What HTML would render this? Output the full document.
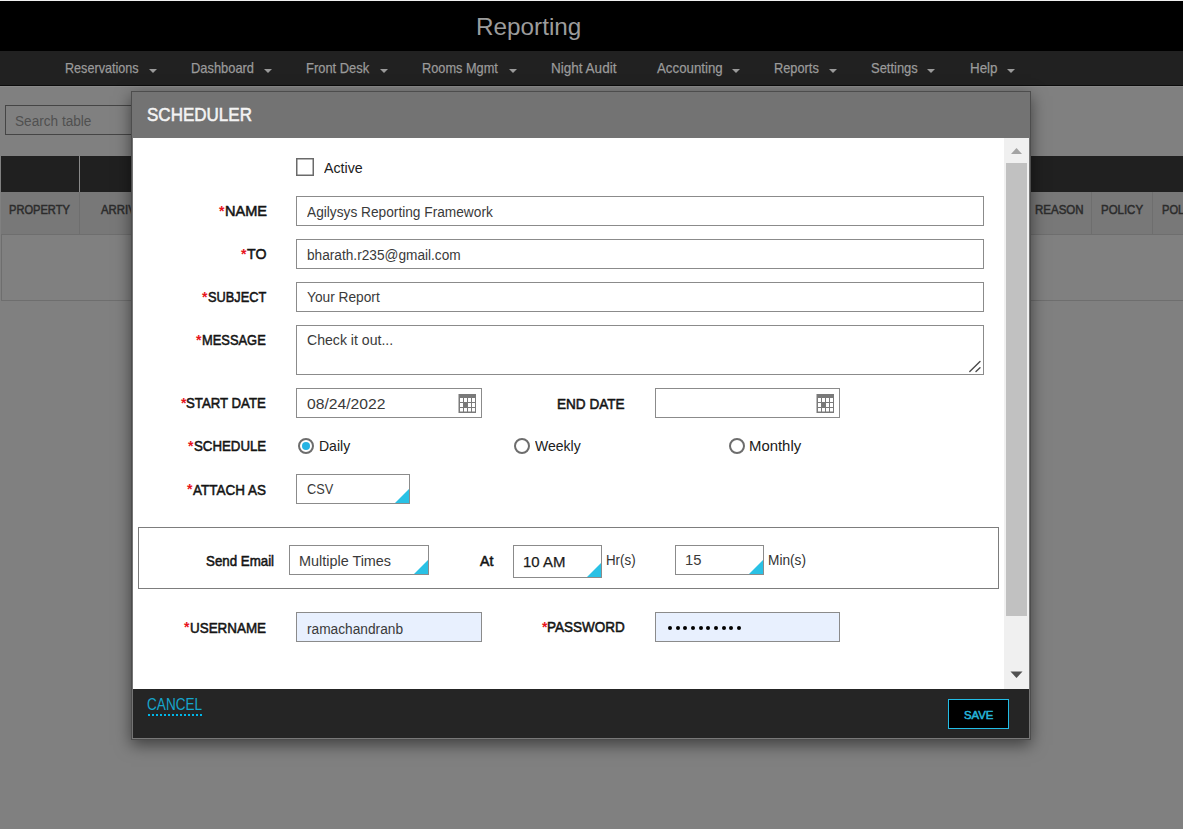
<!DOCTYPE html>
<html><head><meta charset="utf-8"><title>Reporting - Scheduler</title>
<style>
*{margin:0;padding:0;box-sizing:border-box}
html,body{width:1183px;height:829px;overflow:hidden;background:#808080;font-family:"Liberation Sans",sans-serif;position:relative}
.abs{position:absolute}
.tx{position:absolute;white-space:nowrap;line-height:1;transform-origin:0 0}
.topline{left:0;top:0;width:1183px;height:1px;background:#f0f0f0}
.hdr{left:0;top:1px;width:1183px;height:50px;background:#000}
.nav{left:0;top:51px;width:1183px;height:34px;background:#212121}
.navline{left:0;top:85px;width:1183px;height:1px;background:#0c0c0c}
.navline2{left:0;top:86px;width:1183px;height:1px;background:#8a8a8a}
.caret{position:absolute;width:0;height:0;border-left:4px solid transparent;border-right:4px solid transparent;border-top:4px solid #9a9a9a}
.search{left:5px;top:105px;width:260px;height:30px;border:1px solid #454545}
.thd{left:1px;top:156px;width:1182px;height:36px;background:#202020}
.thdsep{left:79px;top:156px;width:1px;height:36px;background:#8a8a8a}
.tlab{left:1px;top:192px;width:1182px;height:43px;background:#787878;border-bottom:1px solid #6e6e6e}
.tsep{top:192px;width:1px;height:42px;background:#6e6e6e}
.tbody{left:1px;top:235px;width:1182px;height:66px;background:#808080;border-left:1px solid #6e6e6e;border-bottom:1px solid #6e6e6e}
.modal{left:131px;top:91px;width:900px;height:649px;border:1px solid #4d4d4d;background:#747474;box-shadow:0 5px 15px rgba(0,0,0,.5)}
.mbody{left:133px;top:138px;width:896px;height:551px;background:#fff}
.mhead{left:132px;top:92px;width:898px;height:46px;background:#737373}
.mfoot{left:133px;top:689px;width:896px;height:49px;background:#252525}
.mfootline{left:132px;top:738px;width:898px;height:1px;background:#787878}
.sbtrack{left:1004px;top:138px;width:25px;height:551px;background:#f0f0f0}
.sbthumb{left:1006px;top:163px;width:21px;height:453px;background:#c1c1c1}
.inp{position:absolute;border:1px solid #8b8b8b;background:#fff}
.inp.af{background:#e8f0fe}
.tri{position:absolute;width:0;height:0;border-left:14px solid transparent;border-bottom:14px solid #29c1e5}
.chk{left:296px;top:158px;width:18px;height:18px;border:2px solid #6a6a6a;border-radius:1px}
.radio{position:absolute;width:16px;height:16px;border:2px solid #6d6d6d;border-radius:50%;background:#fff}
.radio.on::after{content:"";position:absolute;left:2px;top:2px;width:8px;height:8px;border-radius:50%;background:#25b3e3}
.sendbox{left:138px;top:527px;width:861px;height:62px;border:1px solid #7d7d7d}
.save{left:948px;top:699px;width:61px;height:30px;border:1px solid #23bde6;background:#000}
.dots{left:148px;top:714px;width:55px;height:2px;background:repeating-linear-gradient(90deg,#00b6e8 0 2px,transparent 2px 4px)}
.pw{position:absolute;width:4.2px;height:4.2px;border-radius:50%;background:#000}
</style></head><body>
<div class="abs topline"></div>
<div class="abs hdr"></div>
<div class="abs nav"></div>
<div class="abs navline"></div>
<div class="abs navline2"></div>
<span class="caret" style="left:149px;top:69px"></span>
<span class="caret" style="left:264px;top:69px"></span>
<span class="caret" style="left:380px;top:69px"></span>
<span class="caret" style="left:509px;top:69px"></span>
<span class="caret" style="left:732px;top:69px"></span>
<span class="caret" style="left:829px;top:69px"></span>
<span class="caret" style="left:927px;top:69px"></span>
<span class="caret" style="left:1007px;top:69px"></span>
<div class="abs search"></div>
<div class="abs thd"></div>
<div class="abs thdsep"></div>
<div class="abs tlab"></div>
<div class="abs tsep" style="left:79px"></div>
<div class="abs tsep" style="left:1091px"></div>
<div class="abs tsep" style="left:1152px"></div>
<div class="abs tbody"></div>
<span id="t10" class="tx" style="left:15px;top:113px;font-size:15.26px;font-weight:400;color:#505050;transform:scaleX(0.8927);">Search table</span>
<span id="t11" class="tx" style="left:9px;top:203px;font-size:13.37px;font-weight:400;-webkit-text-stroke-width:0.55px;color:#2c2c2c;transform:scaleX(0.8304);">PROPERTY</span>
<span id="t12" class="tx" style="left:101px;top:203px;font-size:13.37px;font-weight:400;-webkit-text-stroke-width:0.55px;color:#2c2c2c;transform:scaleX(0.85);">ARRIVAL</span>
<span id="t13" class="tx" style="left:1035px;top:203px;font-size:13.37px;font-weight:400;-webkit-text-stroke-width:0.55px;color:#2c2c2c;transform:scaleX(0.8618);">REASON</span>
<span id="t14" class="tx" style="left:1101px;top:203px;font-size:13.37px;font-weight:400;-webkit-text-stroke-width:0.55px;color:#2c2c2c;transform:scaleX(0.8580);">POLICY</span>
<span id="t15" class="tx" style="left:1162px;top:203px;font-size:13.37px;font-weight:400;-webkit-text-stroke-width:0.55px;color:#2c2c2c;transform:scaleX(0.83);">POLICY</span>
<div class="abs modal"></div>
<div class="abs mbody"></div>
<div class="abs mhead"></div>
<div class="abs sbtrack"></div>
<div class="abs sbthumb"></div>
<svg class="abs" style="left:1004px;top:138px" width="25" height="551" viewBox="0 0 25 551">
<polygon points="7,16 12.5,10 18,16" fill="#a3a3a3"/>
<polygon points="6.5,533.5 12.5,540 18.5,533.5" fill="#505050"/>
</svg>
<svg class="abs" style="left:296px;top:158px" width="18" height="18"><rect x="0.75" y="0.75" width="16.5" height="16.5" fill="#fff" stroke="#6a6a6a" stroke-width="1.5"/></svg>
<div class="inp" style="left:296px;top:196px;width:688px;height:30px"></div>
<div class="inp" style="left:296px;top:239px;width:688px;height:30px"></div>
<div class="inp" style="left:296px;top:282px;width:688px;height:30px"></div>
<div class="inp" style="left:296px;top:325px;width:688px;height:50px"></div>
<svg class="abs" style="left:966px;top:358px" width="18" height="17" viewBox="0 0 18 17">
<path d="M3.8,13.5 L14,3.5 M10,13.5 L14,9.8" stroke="#4a4a4a" stroke-width="1.4" stroke-linecap="round"/>
</svg>
<div class="inp" style="left:296px;top:388px;width:186px;height:30px"></div>
<div class="inp" style="left:655px;top:388px;width:185px;height:30px"></div>
<svg class="abs" style="left:458px;top:394px" width="18" height="19" viewBox="0 0 18 19">
<rect x="0.5" y="0" width="17.5" height="19" fill="#7a7a7a"/>
<g fill="#fff"><rect x="2" y="4" width="3" height="4"/><rect x="6" y="4" width="3" height="4"/><rect x="10" y="4" width="3" height="4"/><rect x="14" y="4" width="3" height="4"/>
<rect x="2" y="9" width="3" height="4"/><rect x="10" y="9" width="3" height="4"/><rect x="14" y="9" width="3" height="4"/>
<rect x="2" y="14" width="3" height="3.5"/><rect x="6" y="14" width="3" height="3.5"/><rect x="10" y="14" width="3" height="3.5"/><rect x="14" y="14" width="3" height="3.5"/></g>
</svg>
<svg class="abs" style="left:816px;top:394px" width="18" height="19" viewBox="0 0 18 19">
<rect x="0.5" y="0" width="17.5" height="19" fill="#7a7a7a"/>
<g fill="#fff"><rect x="2" y="4" width="3" height="4"/><rect x="6" y="4" width="3" height="4"/><rect x="10" y="4" width="3" height="4"/><rect x="14" y="4" width="3" height="4"/>
<rect x="2" y="9" width="3" height="4"/><rect x="10" y="9" width="3" height="4"/><rect x="14" y="9" width="3" height="4"/>
<rect x="2" y="14" width="3" height="3.5"/><rect x="6" y="14" width="3" height="3.5"/><rect x="10" y="14" width="3" height="3.5"/><rect x="14" y="14" width="3" height="3.5"/></g>
</svg>
<div class="radio on" style="left:298px;top:438px"></div>
<div class="radio" style="left:514px;top:438px"></div>
<div class="radio" style="left:729px;top:438px"></div>
<div class="inp" style="left:296px;top:474px;width:114px;height:30px"></div>
<div class="tri" style="left:395px;top:489px"></div>
<div class="abs sendbox"></div>
<div class="inp" style="left:289px;top:545px;width:140px;height:30px"></div>
<div class="tri" style="left:414px;top:560px"></div>
<div class="inp" style="left:513px;top:545px;width:89px;height:33px"></div>
<div class="tri" style="left:587px;top:563px"></div>
<div class="inp" style="left:675px;top:545px;width:89px;height:30px"></div>
<div class="tri" style="left:749px;top:560px"></div>
<div class="inp af" style="left:296px;top:612px;width:186px;height:30px"></div>
<div class="inp af" style="left:655px;top:612px;width:185px;height:30px"></div>
<span class="pw" style="left:668.00px;top:626px"></span><span class="pw" style="left:675.65px;top:626px"></span><span class="pw" style="left:683.30px;top:626px"></span><span class="pw" style="left:690.95px;top:626px"></span><span class="pw" style="left:698.60px;top:626px"></span><span class="pw" style="left:706.25px;top:626px"></span><span class="pw" style="left:713.90px;top:626px"></span><span class="pw" style="left:721.55px;top:626px"></span><span class="pw" style="left:729.20px;top:626px"></span><span class="pw" style="left:736.85px;top:626px"></span>
<div class="abs mfoot"></div>
<div class="abs mfootline"></div>
<div class="abs save"></div>
<div class="abs dots"></div>
<span id="t0" class="tx" style="left:476px;top:15px;font-size:24.13px;font-weight:400;color:#9c9c9c;transform:scaleX(1.0065);">Reporting</span>
<span id="t1" class="tx" style="left:65px;top:60px;font-size:15.12px;font-weight:400;-webkit-text-stroke-width:0.25px;color:#9a9a9a;transform:scaleX(0.8346);">Reservations</span>
<span id="t2" class="tx" style="left:191px;top:60px;font-size:15.12px;font-weight:400;-webkit-text-stroke-width:0.25px;color:#9a9a9a;transform:scaleX(0.8522);">Dashboard</span>
<span id="t3" class="tx" style="left:306px;top:60px;font-size:15.12px;font-weight:400;-webkit-text-stroke-width:0.25px;color:#9a9a9a;transform:scaleX(0.8560);">Front Desk</span>
<span id="t4" class="tx" style="left:422px;top:60px;font-size:15.12px;font-weight:400;-webkit-text-stroke-width:0.25px;color:#9a9a9a;transform:scaleX(0.8446);">Rooms Mgmt</span>
<span id="t5" class="tx" style="left:551px;top:60px;font-size:15.12px;font-weight:400;-webkit-text-stroke-width:0.25px;color:#9a9a9a;transform:scaleX(0.8952);">Night Audit</span>
<span id="t6" class="tx" style="left:657px;top:60px;font-size:15.12px;font-weight:400;-webkit-text-stroke-width:0.25px;color:#9a9a9a;transform:scaleX(0.8792);">Accounting</span>
<span id="t7" class="tx" style="left:774px;top:60px;font-size:15.12px;font-weight:400;-webkit-text-stroke-width:0.25px;color:#9a9a9a;transform:scaleX(0.8472);">Reports</span>
<span id="t8" class="tx" style="left:871px;top:60px;font-size:15.12px;font-weight:400;-webkit-text-stroke-width:0.25px;color:#9a9a9a;transform:scaleX(0.8568);">Settings</span>
<span id="t9" class="tx" style="left:970px;top:60px;font-size:15.12px;font-weight:400;-webkit-text-stroke-width:0.25px;color:#9a9a9a;transform:scaleX(0.8860);">Help</span>
<span id="t16" class="tx" style="left:147px;top:106px;font-size:18.90px;font-weight:400;-webkit-text-stroke-width:0.55px;color:#f4f4f4;transform:scaleX(0.9005);">SCHEDULER</span>
<span id="t17" class="tx" style="left:219px;top:204px;font-size:14.00px;font-weight:700;color:#e8141c;">*</span>
<span id="t18" class="tx" style="left:225px;top:203px;font-size:15.12px;font-weight:400;-webkit-text-stroke-width:0.55px;color:#141414;transform:scaleX(0.9636);">NAME</span>
<span id="t19" class="tx" style="left:241px;top:247px;font-size:14.00px;font-weight:700;color:#e8141c;">*</span>
<span id="t20" class="tx" style="left:247px;top:246px;font-size:15.12px;font-weight:400;-webkit-text-stroke-width:0.55px;color:#141414;transform:scaleX(0.9367);">TO</span>
<span id="t21" class="tx" style="left:202px;top:290px;font-size:14.00px;font-weight:700;color:#e8141c;">*</span>
<span id="t22" class="tx" style="left:208px;top:289px;font-size:15.12px;font-weight:400;-webkit-text-stroke-width:0.55px;color:#141414;transform:scaleX(0.8451);">SUBJECT</span>
<span id="t23" class="tx" style="left:196px;top:333px;font-size:14.00px;font-weight:700;color:#e8141c;">*</span>
<span id="t24" class="tx" style="left:202px;top:332px;font-size:15.12px;font-weight:400;-webkit-text-stroke-width:0.55px;color:#141414;transform:scaleX(0.8529);">MESSAGE</span>
<span id="t25" class="tx" style="left:181px;top:396px;font-size:14.00px;font-weight:700;color:#e8141c;">*</span>
<span id="t26" class="tx" style="left:186px;top:395px;font-size:15.12px;font-weight:400;-webkit-text-stroke-width:0.55px;color:#141414;transform:scaleX(0.8745);">START DATE</span>
<span id="t27" class="tx" style="left:188px;top:439px;font-size:14.00px;font-weight:700;color:#e8141c;">*</span>
<span id="t28" class="tx" style="left:194px;top:438px;font-size:15.12px;font-weight:400;-webkit-text-stroke-width:0.55px;color:#141414;transform:scaleX(0.8777);">SCHEDULE</span>
<span id="t29" class="tx" style="left:187px;top:482px;font-size:14.00px;font-weight:700;color:#e8141c;">*</span>
<span id="t30" class="tx" style="left:193px;top:482px;font-size:15.12px;font-weight:400;-webkit-text-stroke-width:0.55px;color:#141414;transform:scaleX(0.8918);">ATTACH AS</span>
<span id="t31" class="tx" style="left:184px;top:620px;font-size:14.00px;font-weight:700;color:#e8141c;">*</span>
<span id="t32" class="tx" style="left:190px;top:620px;font-size:15.12px;font-weight:400;-webkit-text-stroke-width:0.55px;color:#141414;transform:scaleX(0.8884);">USERNAME</span>
<span id="t33" class="tx" style="left:542px;top:620px;font-size:14.00px;font-weight:700;color:#e8141c;">*</span>
<span id="t34" class="tx" style="left:547px;top:619px;font-size:15.12px;font-weight:400;-webkit-text-stroke-width:0.55px;color:#141414;transform:scaleX(0.8947);">PASSWORD</span>
<span id="t35" class="tx" style="left:557px;top:397px;font-size:14.83px;font-weight:400;-webkit-text-stroke-width:0.55px;color:#141414;transform:scaleX(0.9152);">END DATE</span>
<span id="t36" class="tx" style="left:206px;top:553px;font-size:15.12px;font-weight:400;-webkit-text-stroke-width:0.55px;color:#141414;transform:scaleX(0.8807);">Send Email</span>
<span id="t37" class="tx" style="left:480px;top:555px;font-size:13.95px;font-weight:400;-webkit-text-stroke-width:0.55px;color:#141414;transform:scaleX(1.0113);">At</span>
<span id="t38" class="tx" style="left:307px;top:205px;font-size:14.83px;font-weight:400;color:#3a3a3a;transform:scaleX(0.9241);">Agilysys Reporting Framework</span>
<span id="t39" class="tx" style="left:307px;top:248px;font-size:14.83px;font-weight:400;color:#3a3a3a;transform:scaleX(0.9219);">bharath.r235@gmail.com</span>
<span id="t40" class="tx" style="left:307px;top:290px;font-size:14.83px;font-weight:400;color:#3a3a3a;transform:scaleX(0.9258);">Your Report</span>
<span id="t41" class="tx" style="left:307px;top:333px;font-size:14.83px;font-weight:400;color:#3a3a3a;transform:scaleX(0.9502);">Check it out...</span>
<span id="t42" class="tx" style="left:307px;top:397px;font-size:14.83px;font-weight:400;color:#3a3a3a;transform:scaleX(1.0566);">08/24/2022</span>
<span id="t43" class="tx" style="left:307px;top:482px;font-size:14.83px;font-weight:400;color:#3a3a3a;transform:scaleX(0.8612);">CSV</span>
<span id="t44" class="tx" style="left:299px;top:554px;font-size:14.83px;font-weight:400;color:#3a3a3a;transform:scaleX(0.9717);">Multiple Times</span>
<span id="t45" class="tx" style="left:685px;top:553px;font-size:14.83px;font-weight:400;color:#3a3a3a;transform:scaleX(0.9946);">15</span>
<span id="t46" class="tx" style="left:307px;top:622px;font-size:14.83px;font-weight:400;color:#3a3a3a;transform:scaleX(0.9245);">ramachandranb</span>
<span id="t47" class="tx" style="left:523px;top:555px;font-size:14.83px;font-weight:400;-webkit-text-stroke-width:0.25px;color:#1a1a1a;transform:scaleX(1.0080);">10 AM</span>
<span id="t48" class="tx" style="left:324px;top:160px;font-size:15.12px;font-weight:400;color:#202020;transform:scaleX(0.9413);">Active</span>
<span id="t49" class="tx" style="left:319px;top:438px;font-size:15.41px;font-weight:400;color:#202020;transform:scaleX(0.9100);">Daily</span>
<span id="t50" class="tx" style="left:535px;top:438px;font-size:15.41px;font-weight:400;color:#202020;transform:scaleX(0.9097);">Weekly</span>
<span id="t51" class="tx" style="left:749px;top:438px;font-size:15.41px;font-weight:400;color:#202020;transform:scaleX(0.9671);">Monthly</span>
<span id="t52" class="tx" style="left:606px;top:552px;font-size:15.41px;font-weight:400;color:#333;transform:scaleX(0.8650);">Hr(s)</span>
<span id="t53" class="tx" style="left:768px;top:552px;font-size:15.41px;font-weight:400;color:#333;transform:scaleX(0.8869);">Min(s)</span>
<span id="t54" class="tx" style="left:147px;top:696px;font-size:16.42px;font-weight:400;color:#16a6cc;transform:scaleX(0.8282);">CANCEL</span>
<span id="t55" class="tx" style="left:964px;top:710px;font-size:11.48px;font-weight:400;-webkit-text-stroke-width:0.55px;color:#26b4da;transform:scaleX(0.9887);">SAVE</span>
</body></html>
